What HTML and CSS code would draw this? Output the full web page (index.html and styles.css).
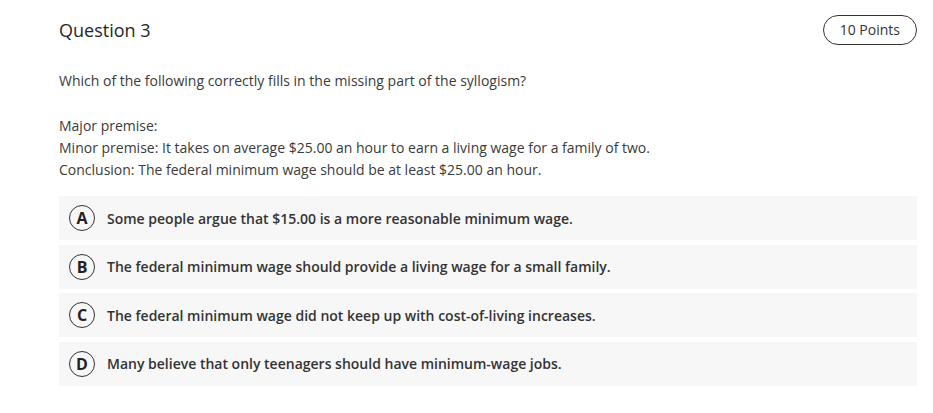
FILE: index.html
```html
<!DOCTYPE html>
<html>
<head>
<meta charset="utf-8">
<link rel="stylesheet" href="styles.css">
</head>
<body>
<div class="question">
  <div class="header">
    <h2 class="title">Question 3</h2>
    <span class="points">10 Points</span>
  </div>
  <p class="prompt">Which of the following correctly fills in the missing part of the syllogism?</p>
  <div class="premises">
    <div>Major premise:</div>
    <div>Minor premise: It takes on average $25.00 an hour to earn a living wage for a family of two.</div>
    <div>Conclusion: The federal minimum wage should be at least $25.00 an hour.</div>
  </div>
  <div class="options">
    <div class="option"><span class="letter">A</span><span class="text">Some people argue that $15.00 is a more reasonable minimum wage.</span></div>
    <div class="option"><span class="letter">B</span><span class="text">The federal minimum wage should provide a living wage for a small family.</span></div>
    <div class="option"><span class="letter">C</span><span class="text">The federal minimum wage did not keep up with cost-of-living increases.</span></div>
    <div class="option"><span class="letter">D</span><span class="text">Many believe that only teenagers should have minimum-wage jobs.</span></div>
  </div>
</div>
</body>
</html>
```

FILE: styles.css
```css
html, body {
  margin: 0;
  padding: 0;
  background: #fff;
}
body {
  font-family: "Open Sans", "Liberation Sans", sans-serif;
  color: #3a3a3a;
}
.question {
  padding: 15px 16px 0 59px;
}
.header {
  display: flex;
  justify-content: space-between;
  align-items: center;
  height: 30px;
}
.title {
  margin: 0;
  font-size: 18px;
  font-weight: 400;
  color: #262626;
}
.points {
  box-sizing: border-box;
  height: 30px;
  padding: 0 16px;
  border: 1px solid #333;
  border-radius: 15px;
  font-size: 14px;
  line-height: 28px;
  color: #333;
}
.prompt {
  margin: 25px 0 0;
  font-size: 14px;
  line-height: 22px;
}
.premises {
  margin-top: 23px;
  font-size: 14px;
  line-height: 22px;
}
.options {
  margin-top: 15px;
  display: flex;
  flex-direction: column;
  gap: 4.5px;
}
.option {
  display: flex;
  align-items: center;
  height: 44px;
  background: #f7f7f7;
  padding-left: 10px;
}
.letter {
  box-sizing: border-box;
  width: 26px;
  height: 26px;
  border: 1.5px solid #333;
  border-radius: 50%;
  display: flex;
  align-items: center;
  justify-content: center;
  font-size: 16px;
  line-height: 1;
  font-weight: 700;
  color: #222;
  flex: none;
}
.text {
  margin-left: 12px;
  font-size: 14px;
  font-weight: 600;
  color: #333;
}
```
